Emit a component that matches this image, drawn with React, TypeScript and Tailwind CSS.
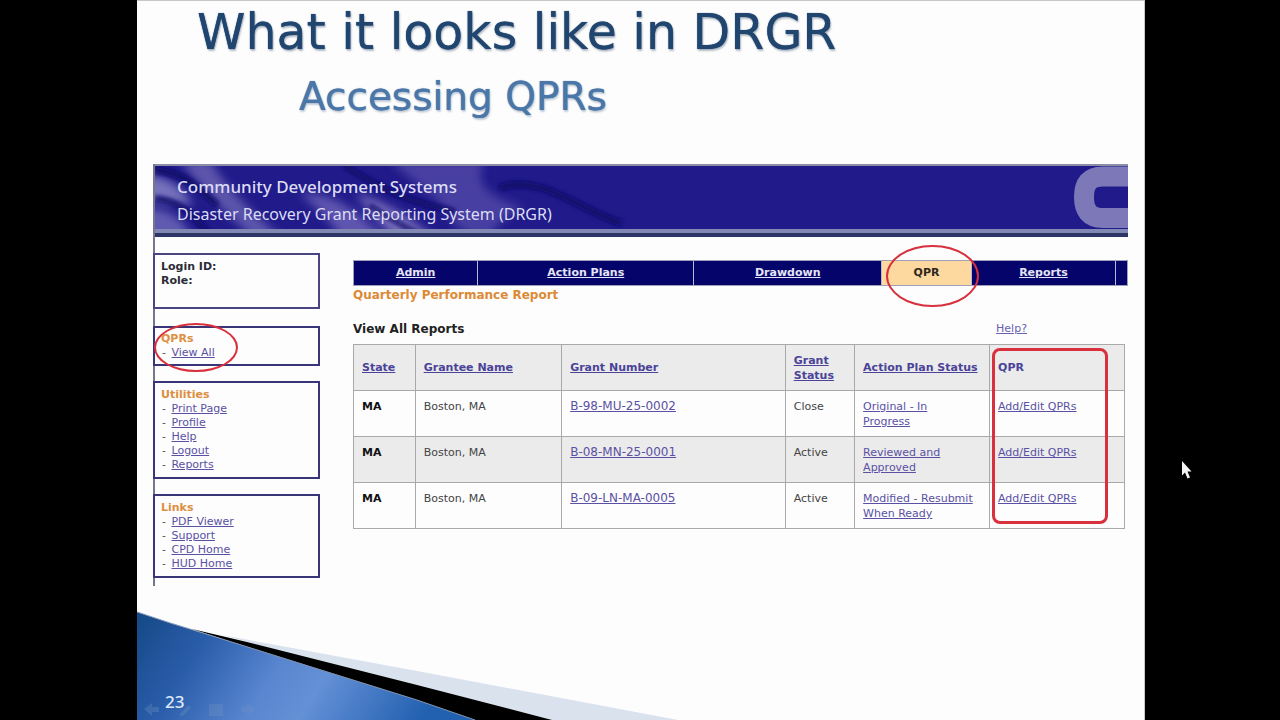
import React from "react";

const sideMenus = [
  {
    title: "Utilities",
    links: ["Print Page", "Profile", "Help", "Logout", "Reports"],
  },
  {
    title: "Links",
    links: ["PDF Viewer", "Support", "CPD Home", "HUD Home"],
  },
];

const grants = [
  { state: "MA", name: "Boston, MA", number: "B-98-MU-25-0002", status: "Close", plan: ["Original - In", "Progress"] },
  { state: "MA", name: "Boston, MA", number: "B-08-MN-25-0001", status: "Active", plan: ["Reviewed and", "Approved"] },
  { state: "MA", name: "Boston, MA", number: "B-09-LN-MA-0005", status: "Active", plan: ["Modified - Resubmit", "When Ready"] },
];

export default function App() {
  return (
    <div className="relative min-h-screen bg-black pl-[137px] pr-[135px]">
      <main className="relative min-h-screen border-t border-r border-[#c8c8c8] bg-[#fdfdfd] px-4 pb-32 font-['DejaVu_Sans',Verdana,sans-serif]">
        <header>
          <h1 className="pl-11 text-[49px] leading-[64px] text-[#20456f] [text-shadow:0_0_1px_#20456f,1px_2px_2px_#b4bcc6]">
            What it looks like in DRGR
          </h1>
          <h2 className="pl-[146px] text-[39px] leading-[64px] text-[#4a76a8] [text-shadow:0_0_1px_#4a76a8,1px_2px_2px_#c4ccd6]">
            Accessing QPRs
          </h2>
        </header>

        <section className="mt-[35px] border-l-2 border-[#77778c]">
          <Banner />
          <div className="flex gap-[33px] pb-2 pt-4">
            <Sidebar />
            <div className="min-w-0 flex-1 pt-[7px]">
              <TopNav />
              <p className="text-xs leading-[18px] font-bold text-[#dc8a35]">Quarterly Performance Report</p>
              <div className="mt-4 flex justify-between pr-[101px] leading-[18px]">
                <h3 className="text-xs leading-[18px] font-bold text-[#222]">View All Reports</h3>
                <a href="#" className="text-[11px] text-[#6a62b0] underline">Help?</a>
              </div>
              <ReportTable />
            </div>
          </div>
        </section>

        <SlideCorner />
      </main>
      <MouseCursor />
    </div>
  );
}

function Banner() {
  return (
    <div className="relative h-[73px] overflow-hidden border-t-2 border-[#8c8ca4] bg-[#201a8a]">
      <svg className="absolute inset-y-0 left-0 h-full w-[520px]" viewBox="0 0 520 72" preserveAspectRatio="none" aria-hidden="true">
        <defs>
          <filter id="soft" x="-20%" y="-20%" width="140%" height="140%">
            <feGaussianBlur stdDeviation="5" />
          </filter>
          <filter id="softer" x="-20%" y="-20%" width="140%" height="140%">
            <feGaussianBlur stdDeviation="2" />
          </filter>
        </defs>
        <g filter="url(#soft)">
          <path d="M-10 8 C15 10 30 25 38 40 L-10 34Z" fill="#8c88c8" opacity=".8" />
          <path d="M-10 42 C20 44 30 56 40 80 L-10 80Z" fill="#7c78c0" opacity=".7" />
          <path d="M25 -6 L55 -6 C70 22 100 50 135 80 L105 80 C75 50 45 25 25 -6Z" fill="#6c64b4" opacity=".8" />
          <path d="M145 28 C175 25 205 45 235 80 L190 80 C180 60 165 45 145 28Z" fill="#7468bc" opacity=".75" />
          <path d="M200 28 C225 34 255 50 285 80 L245 80Z" fill="#9488cc" opacity=".75" />
          <path d="M235 -6 L330 -6 C320 14 325 30 370 42 C350 50 340 60 330 80 L300 60 C290 35 262 20 235 -6Z" fill="#5850ac" opacity=".7" />
        </g>
        <g filter="url(#softer)" fill="none" stroke="#0f0868">
          <path d="M0 4 C30 8 40 18 62 40" strokeWidth="6" />
          <path d="M0 33 C25 35 40 50 56 72" strokeWidth="5" />
          <path d="M190 0 C225 22 250 36 300 46" strokeWidth="5" />
          <path d="M215 40 C230 50 245 60 262 68" strokeWidth="4" />
          <path d="M345 22 C385 8 420 42 466 58" strokeWidth="6" />
        </g>
      </svg>
      {/* cut-off emblem at the right end */}
      <svg className="absolute right-0 top-0 h-[62px] w-14" viewBox="0 0 56 62" aria-hidden="true">
        <path d="M56 10.5 H31 C17 10.5 12 18 12 31 C12 44 17 52 31 52 H56" fill="none" stroke="#7d78b8" strokeWidth="20" />
      </svg>
      <div className="relative pl-[22px] pt-[7px] font-['Noto_Sans',sans-serif] text-[#dcdcf4]">
        <p className="text-[17px] leading-[28px] font-medium">Community Development Systems</p>
        <p className="text-base leading-[26px]">Disaster Recovery Grant Reporting System (DRGR)</p>
      </div>
      <div className="absolute inset-x-0 bottom-0 h-2 border-t-4 border-b-4 border-t-[#8288b4] border-b-[#2c3566]" />
    </div>
  );
}

function Sidebar() {
  return (
    <aside className="w-[165px] shrink-0 text-[11px] leading-[14px]">
      <div className="-ml-0.5 h-14 border-2 border-[#4a4580] pl-[6px] pt-[5px] font-bold text-[#2c2c38]">
        <p>Login ID:</p>
        <p>Role:</p>
      </div>
      <div className="relative -ml-0.5 mt-[17px] h-10 border-2 border-[#3a3478] pl-[6px] pt-1">
        <p className="font-bold text-[#dc8f40]">QPRs</p>
        <p className="pl-px text-[#555]">
          - <a href="#" className="ml-0.5 text-[#5a51a4] underline">View All</a>
        </p>
        <span className="absolute -left-px -top-[5px] h-[49px] w-[84px] rounded-[50%] border-2 border-[#d8303c]" />
      </div>
      {sideMenus.map((menu) => (
        <div key={menu.title} className="-ml-0.5 mt-[15px] border-2 border-[#3a3478] px-[6px] py-[5px]">
          <p className="font-bold text-[#dc8f40]">{menu.title}</p>
          <ul>
            {menu.links.map((link) => (
              <li key={link} className="pl-px text-[#555]">
                - <a href="#" className="ml-0.5 text-[#5a51a4] underline">{link}</a>
              </li>
            ))}
          </ul>
        </div>
      ))}
    </aside>
  );
}

function TopNav() {
  const tab = "flex items-center justify-center bg-[#04046a] text-[#e4e4f6] underline";

  return (
    <nav className="grid h-[26px] grid-cols-[124fr_216fr_188fr_89fr_144fr_11fr] gap-px border border-[#a0a0b8] bg-[#b8b8d0] text-[11px] font-bold">
      <a href="#" className={tab}>Admin</a>
      <a href="#" className={tab}>Action Plans</a>
      <a href="#" className={tab}>Drawdown</a>
      <a href="#" className="relative flex items-center justify-center bg-[#fdd9a0] text-[#2e2620]">
        QPR
        <span className="absolute -right-2 -top-4 left-1 h-[62px] rounded-[50%] border-2 border-[#d8303c]" />
      </a>
      <a href="#" className={tab}>Reports</a>
      <span className="bg-[#04046a]" />
    </nav>
  );
}

function ReportTable() {
  const cell = "border border-[#a9a9a9] px-2 pb-[7px] pt-2 align-top";
  const head = "border border-[#a9a9a9] px-2 text-left font-bold";
  const link = "text-[#5a51a4] underline";

  return (
    <div className="mt-[6px] pr-[3px]">
      <table className="w-full table-fixed border-collapse text-[11px] leading-[15px] text-[#444]">
        <colgroup>
          <col className="w-[8%]" />
          <col className="w-[19%]" />
          <col className="w-[29%]" />
          <col className="w-[9%]" />
          <col className="w-[17.5%]" />
          <col className="w-[17.5%]" />
        </colgroup>
        <thead>
          <tr className="h-[46px] bg-[#ebebeb] text-[#4a4398]">
            <th className={head}><a href="#" className="underline">State</a></th>
            <th className={head}><a href="#" className="underline">Grantee Name</a></th>
            <th className={head}><a href="#" className="underline">Grant Number</a></th>
            <th className={head}><a href="#" className="underline">Grant Status</a></th>
            <th className={`${head} whitespace-nowrap`}><a href="#" className="underline">Action Plan Status</a></th>
            <th className={`${head} relative`}>
              QPR
              <span className="absolute left-0.5 top-[3px] h-[176px] w-[116px] rounded-lg border-[3px] border-[#d8303c]" />
            </th>
          </tr>
        </thead>
        <tbody>
          {grants.map((grant) => (
            <tr key={grant.number} className="even:bg-[#ebebeb]">
              <td className={`${cell} font-bold text-[#111]`}>{grant.state}</td>
              <td className={cell}>{grant.name}</td>
              <td className={`${cell} text-xs leading-[15px]`}><a href="#" className={link}>{grant.number}</a></td>
              <td className={cell}>{grant.status}</td>
              <td className={cell}>
                <a href="#" className={link}>
                  {grant.plan[0]}
                  <br />
                  {grant.plan[1]}
                </a>
              </td>
              <td className={cell}><a href="#" className={link}>Add/Edit QPRs</a></td>
            </tr>
          ))}
        </tbody>
      </table>
    </div>
  );
}

function SlideCorner() {
  return (
    <footer className="absolute bottom-0 left-0">
      <svg width="545" height="120" viewBox="0 0 545 120" aria-hidden="true">
        <defs>
          <linearGradient id="corner" x1="0" y1="0" x2="1" y2="0.2">
            <stop offset="0" stopColor="#154885" />
            <stop offset=".25" stopColor="#2b5eab" />
            <stop offset=".5" stopColor="#5a86d0" />
            <stop offset=".65" stopColor="#6490d6" />
            <stop offset="1" stopColor="#2260b0" />
          </linearGradient>
        </defs>
        <path d="M85 35 L280 71 L541 120 H400Z" fill="#dae2ee" />
        <path d="M55 29 L110 42 L280 85 L415 120 H330Z" fill="#000" />
        <path d="M0 12 Q35 24 66 33 L280 100 L338 120 H0Z" fill="url(#corner)" />
        <path d="M0 12 Q35 24 66 33 L280 100 L338 120" fill="none" stroke="#8296b4" strokeWidth="1" />
        <g fill="#7294c4" opacity=".3">
          <path d="M7 109 L15 103 V107 H22 V112 H15 V116Z" />
          <path d="M42 115 L51 105 L54 108 L46 116Z" />
          <rect x="72" y="104" width="14" height="12" />
          <path d="M118 109 L110 103 V107 H104 V112 H110 V116Z" />
        </g>
      </svg>
      <span className="absolute bottom-2 left-7 font-['Noto_Sans',sans-serif] text-[17px] leading-5 font-medium text-[#dde8f8]">23</span>
    </footer>
  );
}

function MouseCursor() {
  return (
    <svg className="absolute left-[1181px] top-[460px] h-5 w-3" viewBox="0 0 12 20" aria-hidden="true">
      <path d="M1 1 V15.5 L4 12.5 L6.5 18.5 L9 17.5 L6.5 11.5 H10.5Z" fill="#f4f4f4" />
    </svg>
  );
}
